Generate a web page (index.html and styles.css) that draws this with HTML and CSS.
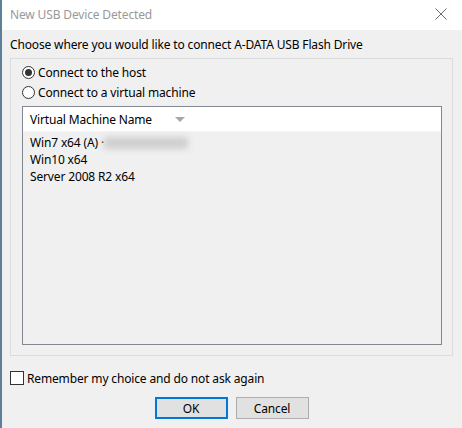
FILE: index.html
```html
<!DOCTYPE html>
<html>
<head>
<meta charset="utf-8">
<link rel="stylesheet" href="styles.css">
</head>
<body>
<div class="window">
  <div class="titlebar">
    <span class="title">New USB Device Detected</span>
    <svg class="close" width="12" height="12" viewBox="0 0 12 12"><path d="M0.5 0.5 L11.5 11.5 M11.5 0.5 L0.5 11.5" stroke="#6b6b6b" stroke-width="1" fill="none"/></svg>
  </div>
  <div class="body">
    <div class="prompt">Choose where you would like to connect A-DATA USB Flash Drive</div>
    <div class="group">
      <label class="radio-row"><span class="radio checked"></span>Connect to the host</label>
      <label class="radio-row"><span class="radio"></span>Connect to a virtual machine</label>
      <div class="listview">
        <div class="header">
          <span>Virtual Machine Name</span>
          <svg class="sort" width="10" height="6" viewBox="0 0 10 6"><path d="M0 0 L10 0 L5 5 Z" fill="#a8a8a8"/></svg>
        </div>
        <div class="rows">
          <div class="row">Win7 x64 (A) · <span class="blur"></span></div>
          <div class="row">Win10 x64</div>
          <div class="row">Server 2008 R2 x64</div>
        </div>
      </div>
    </div>
    <label class="check-row"><span class="checkbox"></span>Remember my choice and do not ask again</label>
    <div class="buttons">
      <button class="btn default">OK</button>
      <button class="btn">Cancel</button>
    </div>
  </div>
</div>
</body>
</html>
```
FILE: styles.css
```css
html, body {
  margin: 0;
  padding: 0;
  width: 462px;
  height: 428px;
  overflow: hidden;
}
body {
  font-family: "Noto Sans", "Open Sans", sans-serif;
  font-size: 12px;
  letter-spacing: -0.15px;
  color: #000;
}
.window {
  width: 462px;
  height: 428px;
  box-sizing: border-box;
  border-left: 2px solid #5e7e9a;
  display: flex;
  flex-direction: column;
  background: #f0f0f0;
}
.titlebar {
  height: 30px;
  background: #fff;
  display: flex;
  align-items: center;
  justify-content: space-between;
  padding: 0 15px 0 8px;
  flex-shrink: 0;
}
.title {
  color: #999;
  font-size: 12px;
  margin-top: -2px;
}
.close {
  margin-top: -3px;
}
.body {
  flex: 1;
  padding: 6px 9px 0 8px;
  display: flex;
  flex-direction: column;
}
.prompt {
  height: 18px;
  line-height: 18px;
}
.group {
  margin-top: 4px;
  height: 298px;
  box-sizing: border-box;
  border: 1px solid #dcdcdc;
  padding: 3px 10px 10px 11px;
  display: flex;
  flex-direction: column;
}
.radio-row, .check-row {
  display: flex;
  align-items: center;
  height: 20px;
}
.radio {
  width: 11px;
  height: 11px;
  border: 1px solid #333;
  border-radius: 50%;
  background: #fff;
  margin-right: 3px;
  position: relative;
  box-sizing: content-box;
}
.radio.checked::after {
  content: "";
  position: absolute;
  left: 2px;
  top: 2px;
  width: 7px;
  height: 7px;
  border-radius: 50%;
  background: #333;
}
.listview {
  margin-top: 4px;
  flex: 1;
  border: 1px solid #828790;
  background: #f0f0f0;
  display: flex;
  flex-direction: column;
}
.header {
  background: #fff;
  display: flex;
  align-items: center;
  padding-left: 7px;
  padding-top: 1px;
  box-sizing: border-box;
  height: 25px;
  border-bottom: 1px solid #f4f4f4;
}
.sort {
  margin-left: 23px;
  margin-top: 1px;
}
.rows {
  padding: 3px 0 0 7px;
}
.row {
  height: 16.8px;
  line-height: 16.8px;
  display: flex;
  align-items: center;
}
.blur {
  display: inline-block;
  width: 84px;
  height: 12px;
  margin-left: 0;
  background: #cfcfcf;
  filter: blur(3px);
}
.check-row {
  margin-top: 12px;
}
.checkbox {
  width: 12px;
  height: 12px;
  border: 1px solid #333;
  background: #fff;
  margin-right: 3px;
}
.buttons {
  display: flex;
  justify-content: center;
  gap: 8px;
  margin-top: 9px;
  padding-right: 0;
}
.btn {
  width: 73px;
  height: 22px;
  box-sizing: border-box;
  border: 1px solid #adadad;
  background: #e1e1e1;
  font-family: inherit;
  font-size: 12px;
  letter-spacing: -0.15px;
  padding: 0;
  color: #000;
}
.btn.default {
  border: 2px solid #0078d7;
}
```
